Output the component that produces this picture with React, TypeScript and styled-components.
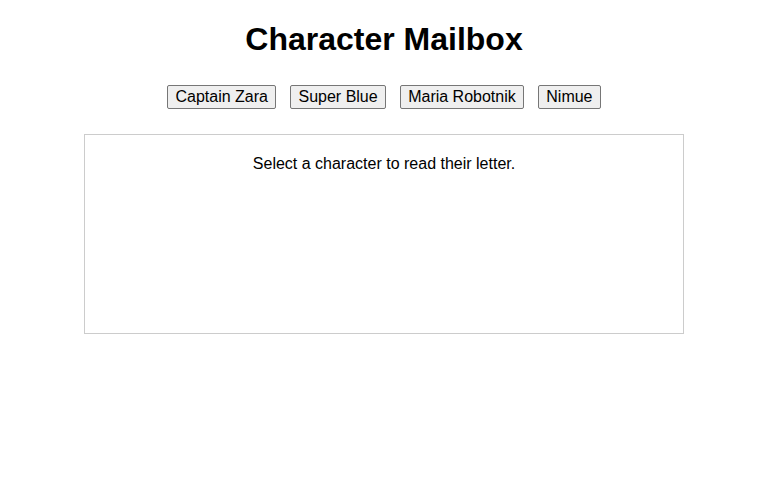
import React, { useState } from 'react';
import styled, { createGlobalStyle } from 'styled-components';

const GlobalStyle = createGlobalStyle`
    body {
        margin: 0;
        background: #fff;
        font-family: "Liberation Sans", Arial, sans-serif;
        color: #000;
    }
`

const Page = styled.div`
    display: flex;
    flex-direction: column;
    align-items: center;
    padding-top: 21px;
`

const Title = styled.h1`
    margin: 0;
    font-size: 32px;
    line-height: 37px;
    font-weight: bold;
`

const ButtonRow = styled.div`
    display: flex;
    gap: 14.5px;
    margin-top: 27px;
`

const CharacterButton = styled.button<{ $active?: boolean }>`
    font-family: "Liberation Sans", Arial, sans-serif;
    font-size: 16px;
    line-height: 18px;
    padding: 2px 7px;
    border: 1px solid #767676;
    border-radius: 2px;
    background-color: ${p => (p.$active ? '#dcdcdc' : '#efefef')};
    color: #000;
    cursor: pointer;

    &:hover {
        background-color: #e5e5e5;
    }
`

const LetterBox = styled.div`
    box-sizing: border-box;
    width: 600px;
    height: 200px;
    margin-top: 25px;
    padding: 20px;
    border: 1px solid #ccc;
    text-align: center;
    font-size: 16px;
    line-height: 18px;
`

const characters = [
    { name: 'Captain Zara', letter: 'Greetings from the stars! My crew and I are exploring a new galaxy.' },
    { name: 'Super Blue', letter: 'Hello friend! Today I saved the city again. Stay brave!' },
    { name: 'Maria Robotnik', letter: 'Beep boop. My latest invention is almost ready.' },
    { name: 'Nimue', letter: 'From the lake, I send you wishes of wisdom and wonder.' },
];

export default function App() {
    const [selected, setSelected] = useState<number | null>(null);

    return (
        <Page>
            <GlobalStyle />
            <Title>Character Mailbox</Title>
            <ButtonRow>
                {characters.map((c, index) => (
                    <CharacterButton key={c.name} $active={selected === index} onClick={() => setSelected(index)}>
                        {c.name}
                    </CharacterButton>
                ))}
            </ButtonRow>
            <LetterBox>
                {selected === null ? 'Select a character to read their letter.' : characters[selected].letter}
            </LetterBox>
        </Page>
    );
}
